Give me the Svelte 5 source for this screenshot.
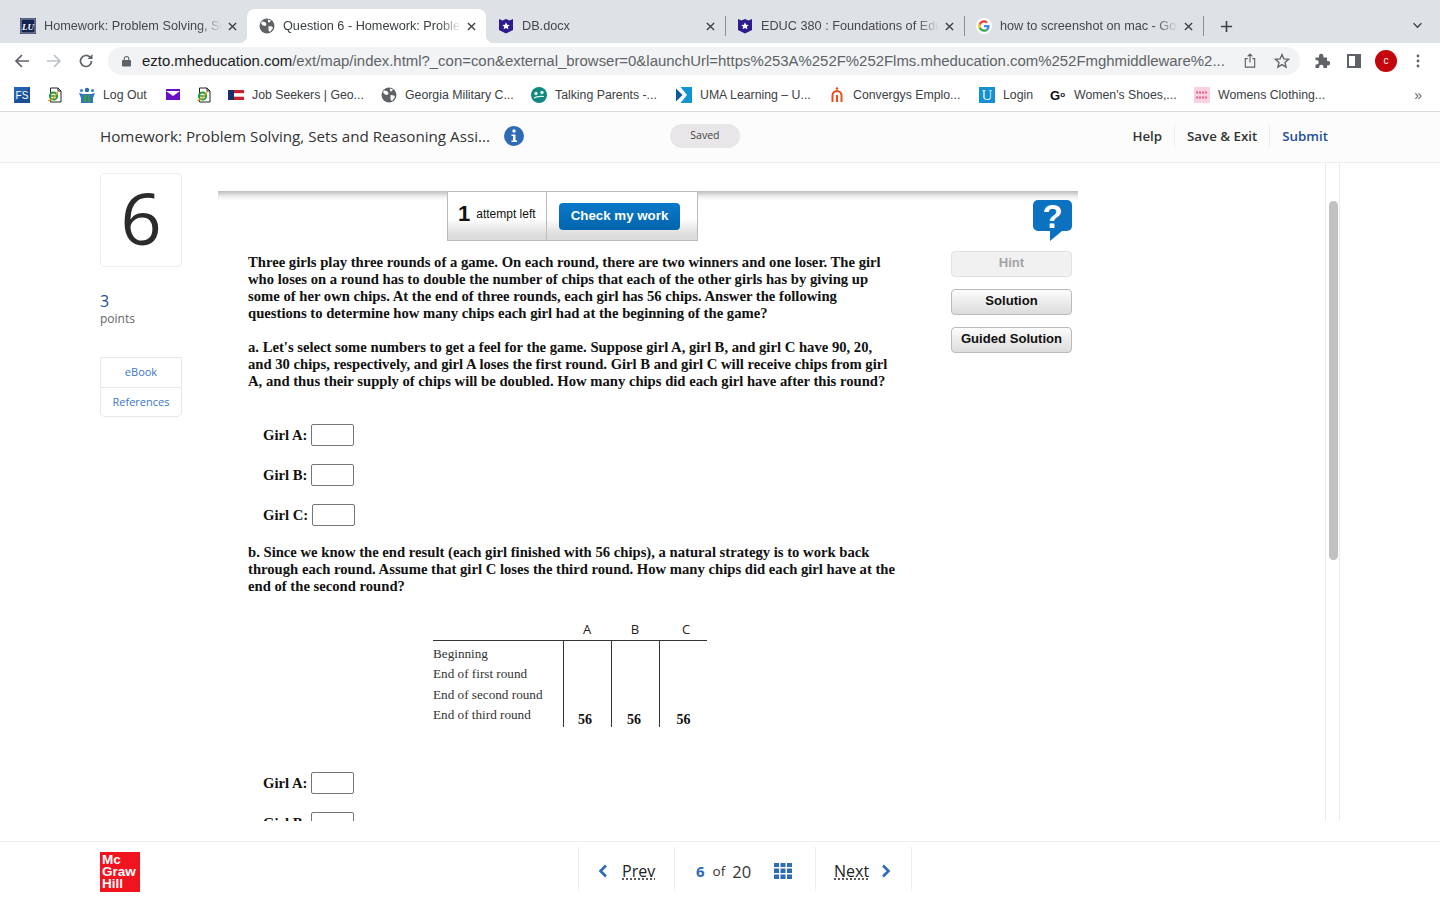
<script>
  const tabs = [
    { icon: 'lu', title: 'Homework: Problem Solving, Sets and Reasoning' },
    { icon: 'globe', title: 'Question 6 - Homework: Problem Solving', active: true },
    { icon: 'shield', title: 'DB.docx' },
    { icon: 'shield', title: 'EDUC 380 : Foundations of Education', divider: true },
    { icon: 'google', title: 'how to screenshot on mac - Google Search', divider: true }
  ];

  const bookmarks = [
    { icon: 'fs', w: 18 },
    { icon: 'ie', w: 17 },
    { icon: 'people', text: 'Log Out', w: 71 },
    { icon: 'mail', w: 16 },
    { icon: 'ie', w: 17 },
    { icon: 'flag', text: 'Job Seekers | Geo...', w: 138 },
    { icon: 'globe', text: 'Georgia Military C...', w: 135 },
    { icon: 'talk', text: 'Talking Parents -...', w: 130 },
    { icon: 'uma', text: 'UMA Learning – U...', w: 138 },
    { icon: 'conv', text: 'Convergys Emplo...', w: 135 },
    { icon: 'u', text: 'Login', w: 56 },
    { icon: 'go', text: "Women's Shoes,...", w: 129 },
    { icon: 'pink', text: 'Womens Clothing...', w: 135 }
  ];

  const rows = ['Beginning', 'End of first round', 'End of second round', 'End of third round'];
</script>

{#snippet favicon(name)}
  {#if name === 'lu'}
    <svg class="fav" viewBox="0 0 16 16"><rect width="16" height="16" fill="#14224f"/><rect x="1" y="1" width="14" height="14" fill="none" stroke="#fff" stroke-width=".6"/><text x="8" y="12" text-anchor="middle" class="lu">LU</text></svg>
  {:else if name === 'globe'}
    <svg class="fav" viewBox="0 0 16 16"><circle cx="8" cy="8" r="7.500" fill="#5f6368"/><path d="M3 3.500l3 .5 1.500 2-1 2-2.500-.5L2 5.500zM9 1.500l3 1-1.500 2-1.500-.5zM9.500 8l3.500.5 1 1.500-3 4-1.500-1.500z" fill="#fff"/></svg>
  {:else if name === 'shield'}
    <svg class="fav" viewBox="0 0 16 16"><path d="M1 1l3.500 1.500L8 1l3.500 1.500L15 1v11l-7 3.500L1 12z" fill="#2e1a8f"/><path d="M8 4.200l1.100 2.500 2.700.2-2 1.800.6 2.600L8 9.900l-2.400 1.400.6-2.600-2-1.800 2.700-.2z" fill="#fff"/></svg>
  {:else if name === 'google'}
    <svg class="fav" viewBox="0 0 16 16"><circle cx="8" cy="8" r="8" fill="#fff"/><path d="M13.600 8.100c0-.4 0-.8-.1-1.200H8v2.300h3.200c-.1.8-.6 1.400-1.200 1.800l1.900 1.500c1.100-1 1.700-2.500 1.700-4.400z" fill="#4285f4"/><path d="M8 13.800c1.600 0 2.900-.5 3.900-1.400L10 10.900c-.5.4-1.200.6-2 .6-1.500 0-2.800-1-3.300-2.400l-1.900 1.500c1 1.900 3 3.200 5.200 3.200z" fill="#34a853"/><path d="M4.700 9.100c-.2-.7-.2-1.500 0-2.200L2.800 5.400c-.8 1.600-.8 3.600 0 5.200z" fill="#fbbc05"/><path d="M8 4.500c.9 0 1.600.3 2.200.9l1.700-1.700C10.900 2.800 9.500 2.200 8 2.200c-2.200 0-4.200 1.300-5.200 3.200l1.900 1.500C5.200 5.500 6.500 4.500 8 4.500z" fill="#ea4335"/></svg>
  {:else if name === 'fs'}
    <svg class="fav" viewBox="0 0 16 16"><rect width="16" height="16" fill="#2460ad"/><path d="M0 16L16 0v16z" fill="#1b4f95"/><text x="8" y="12" text-anchor="middle" class="fs">FS</text></svg>
  {:else if name === 'ie'}
    <svg class="fav" viewBox="0 0 16 16"><path d="M3.500 1H11l3 3v11H3.500z" fill="#fff" stroke="#222"/><path d="M11 1v3h3" fill="none" stroke="#222"/><circle cx="6.500" cy="9" r="3.600" fill="none" stroke="#2a9a3a" stroke-width="2"/><path d="M3.500 9h6" stroke="#2a9a3a" stroke-width="1.500"/><path d="M1 13.500c3 .5 8-4 10-9" fill="none" stroke="#d9a21b" stroke-width="1.200"/></svg>
  {:else if name === 'people'}
    <svg class="fav" viewBox="0 0 16 16"><circle cx="8" cy="3" r="2.200" fill="#2a6ab0"/><circle cx="2.500" cy="3.500" r="1.600" fill="#3d86c6"/><circle cx="13.500" cy="3.500" r="1.600" fill="#3d86c6"/><path d="M0 6l4 1 4 0 4 0 4-1-2 5v5H2v-5z" fill="#2f78bd"/><path d="M5 8h6v7H5z" fill="#3f9b4f"/><path d="M7.500 8h1v7h-1z" fill="#2a6ab0"/></svg>
  {:else if name === 'mail'}
    <svg class="fav" viewBox="0 0 16 16"><rect x="1" y="2" width="14" height="11" fill="#6a10c8"/><path d="M1 4h14L8 9z" fill="#fff"/></svg>
  {:else if name === 'flag'}
    <svg class="fav" viewBox="0 0 16 16"><rect y="3" width="16" height="3.400" fill="#c8202f"/><rect y="6.400" width="16" height="3.300" fill="#fff"/><rect y="9.700" width="16" height="3.300" fill="#c8202f"/><rect y="3" width="6" height="10" fill="#1d2f6b"/></svg>
  {:else if name === 'talk'}
    <svg class="fav" viewBox="0 0 16 16"><circle cx="8" cy="8" r="8" fill="#12887c"/><circle cx="5" cy="6.500" r="1.700" fill="#dff5f2"/><circle cx="11" cy="5.500" r="1.700" fill="#dff5f2"/><path d="M3 11c2-1.500 5-2 10-1.500" stroke="#dff5f2" stroke-width="1.200" fill="none"/></svg>
  {:else if name === 'uma'}
    <svg class="fav" viewBox="0 0 16 16"><path d="M0 1.500L6.500 8 0 14.500z" fill="#0b5a9c"/><path d="M4.500 0H16v16H4.500L11 8z" fill="#1293d4"/></svg>
  {:else if name === 'conv'}
    <svg class="fav" viewBox="0 0 16 16"><circle cx="8" cy="1.500" r="1.300" fill="#e8501a"/><path d="M2.500 15V8.500a5.500 5.500 0 0 1 11 0V15h-2V8.500a3.500 3.500 0 0 0-7 0V15zM7 15V8h2v7z" fill="#e8501a"/></svg>
  {:else if name === 'u'}
    <svg class="fav" viewBox="0 0 16 16"><rect width="16" height="16" fill="#1390d4"/><text x="8" y="13" text-anchor="middle" class="uu">U</text></svg>
  {:else if name === 'go'}
    <svg class="fav" viewBox="0 0 16 16"><text x="0" y="13" class="go">G<tspan class="go-o" dy="-3">o</tspan></text></svg>
  {:else if name === 'pink'}
    <svg class="fav" viewBox="0 0 16 16"><rect width="16" height="16" fill="#fcd0de"/><path d="M2 5.500h12M2 10.500h12" stroke="#e8608e" stroke-width="2" stroke-dasharray="2 1"/></svg>
  {/if}
{/snippet}

<div class="browser">
  <div class="tabstrip">
    {#each tabs as tab}
      <div class="tab" class:active={tab.active} class:divider={tab.divider}>
        {@render favicon(tab.icon)}
        <span class="tab-title">{tab.title}</span>
        <svg class="tab-x" viewBox="0 0 10 10"><path d="M1 1l8 8M9 1l-8 8" stroke="#3c4043" stroke-width="1.500"/></svg>
      </div>
    {/each}
    <div class="tab-end">
      <svg class="plus" viewBox="0 0 14 14"><path d="M7 1v12M1 7h12" stroke="#3c4043" stroke-width="1.700"/></svg>
    </div>
    <svg class="chev" viewBox="0 0 12 8"><path d="M1.500 1.500L6 6l4.500-4.500" fill="none" stroke="#3c4043" stroke-width="1.500"/></svg>
  </div>

  <div class="toolbar">
    <svg class="tool first" viewBox="0 0 16 16"><path d="M15 8H2M8 2L2 8l6 6" fill="none" stroke="#5f6368" stroke-width="1.700"/></svg>
    <svg class="tool" viewBox="0 0 16 16"><path d="M1 8h13M8 2l6 6-6 6" fill="none" stroke="#bdc1c6" stroke-width="1.700"/></svg>
    <svg class="tool" viewBox="0 0 16 16"><path d="M13.500 8a5.500 5.500 0 1 1-1.600-3.900" fill="none" stroke="#5f6368" stroke-width="1.700"/><path d="M14.500 1v5h-5z" fill="#5f6368"/></svg>
    <div class="omnibox">
      <svg class="lock" viewBox="0 0 10 12"><path d="M2.500 5V3.500a2.500 2.500 0 0 1 5 0V5" fill="none" stroke="#5f6368" stroke-width="1.200"/><rect y="5" width="10" height="7" rx="1" fill="#5f6368"/></svg>
      <span class="url"><b>ezto.mheducation.com</b>/ext/map/index.html?_con=con&amp;external_browser=0&amp;launchUrl=https%253A%252F%252Flms.mheducation.com%252Fmghmiddleware%2...</span>
      <svg class="share" viewBox="0 0 12 16"><path d="M3.500 6H1v9h10V6H8.500M6 10V1M3.500 3.500L6 1l2.500 2.500" fill="none" stroke="#5f6368" stroke-width="1.200"/></svg>
      <svg class="star" viewBox="0 0 16 16"><path d="M8 1.500l1.900 4.400 4.700.4-3.600 3.100 1.100 4.700L8 11.600l-4.100 2.500L5 9.400 1.400 6.300l4.700-.4z" fill="none" stroke="#5f6368" stroke-width="1.300"/></svg>
    </div>
    <svg class="ext" viewBox="0 0 16 16"><path d="M1.500 4.500H5V3a2.200 2.200 0 0 1 4.400 0v1.500H13V8h1a2.200 2.200 0 0 1 0 4.400h-1V15H9.500v-1a2.200 2.200 0 0 0-4.400 0v1H1.500v-3.500h1a2.200 2.200 0 0 0 0-4.400h-1z" fill="#5f6368"/></svg>
    <svg class="panel" viewBox="0 0 14 14"><rect x="1" y="1" width="12" height="12" fill="none" stroke="#5f6368" stroke-width="2"/><rect x="8" y="1" width="5" height="12" fill="#5f6368"/></svg>
    <span class="avatar">c</span>
    <svg class="kebab" viewBox="0 0 4 14"><circle cx="2" cy="2" r="1.400" fill="#5f6368"/><circle cx="2" cy="7" r="1.400" fill="#5f6368"/><circle cx="2" cy="12" r="1.400" fill="#5f6368"/></svg>
  </div>

  <div class="bookmarks">
    {#each bookmarks as b}
      <div class="bm" style="width: {b.w}px">
        {@render favicon(b.icon)}
        {#if b.text}<span>{b.text}</span>{/if}
      </div>
    {/each}
    <span class="more">»</span>
  </div>
</div>

<header class="apphead">
  <h1>Homework: Problem Solving, Sets and Reasoning Assi...</h1>
  <svg class="info" viewBox="0 0 20 20"><circle cx="10" cy="10" r="10" fill="#2d6cb5"/><circle cx="10" cy="5" r="1.700" fill="#fff"/><path d="M7.500 8.500H11.500V14.500H13V16H7.500V14.500H9V10H7.500z" fill="#fff"/></svg>
  <span class="saved">Saved</span>
  <nav class="actions">
    <a href="#help">Help</a>
    <a href="#save">Save &amp; Exit</a>
    <a href="#submit" class="submit">Submit</a>
  </nav>
</header>

<main class="stage">
  <div class="scroller">
    <aside class="side">
      <div class="qnum">6</div>
      <div class="pts">3</div>
      <div class="pts-label">points</div>
      <div class="links">
        <a href="#ebook">eBook</a>
        <a href="#refs">References</a>
      </div>
    </aside>

    <section class="frame">
      <div class="frame-top">
        <div class="attempts"><strong>1</strong><span>attempt left</span></div>
        <div class="check"><button>Check my work</button></div>
        <svg class="help" viewBox="0 0 39 41">
          <path d="M5 0h29a5 5 0 0 1 5 5v21a5 5 0 0 1-5 5H29L17 41V31H5a5 5 0 0 1-5-5V5a5 5 0 0 1 5-5z" fill="#0a72c0"/>
          <text x="19.500" y="28" text-anchor="middle" class="qmark">?</text>
        </svg>
      </div>

      <div class="frame-body">
        <div class="question">
          <p>Three girls play three rounds of a game. On each round, there are two winners and one loser. The girl who loses on a round has to double the number of chips that each of the other girls has by giving up some of her own chips. At the end of three rounds, each girl has 56 chips. Answer the following questions to determine how many chips each girl had at the beginning of the game?</p>
          <p>a. Let's select some numbers to get a feel for the game. Suppose girl A, girl B, and girl C have 90, 20, and 30 chips, respectively, and girl A loses the first round. Girl B and girl C will receive chips from girl A, and thus their supply of chips will be doubled. How many chips did each girl have after this round?</p>

          <div class="answers">
            <label>Girl A: <input type="text"></label>
            <label>Girl B: <input type="text"></label>
            <label>Girl C: <input type="text"></label>
          </div>

          <p class="part-b">b. Since we know the end result (each girl finished with 56 chips), a natural strategy is to work back through each round. Assume that girl C loses the third round. How many chips did each girl have at the end of the second round?</p>

          <div class="chips">
            <div class="chips-head"><span></span><span>A</span><span>B</span><span class="head-c">C</span></div>
            <div class="chips-body">
              <div class="chips-labels">
                {#each rows as r}<div>{r}</div>{/each}
              </div>
              <div class="chips-col"><b>56</b></div>
              <div class="chips-col"><b>56</b></div>
              <div class="chips-col"><b>56</b></div>
            </div>
          </div>

          <div class="answers second">
            <label>Girl A: <input type="text"></label>
            <label>Girl B: <input type="text"></label>
          </div>
        </div>

        <div class="tools">
          <button class="disabled">Hint</button>
          <button>Solution</button>
          <button>Guided Solution</button>
        </div>
      </div>
    </section>
  </div>
  <div class="track"><div class="thumb"></div></div>
</main>

<footer class="foot">
  <div class="logo">Mc<br>Graw<br>Hill</div>
  <div class="pager">
    <div class="pg prev">
      <svg viewBox="0 0 10 14"><path d="M8 1.500L2.500 7 8 12.500" fill="none" stroke="#2d6cb5" stroke-width="2.600"/></svg>
      <a href="#prev">Prev</a>
    </div>
    <div class="pg count">
      <b>6</b><small>of</small><span>20</span>
      <svg viewBox="0 0 18 16"><path d="M0 0h5v4H0zM6.500 0h5v4h-5zM13 0h5v4h-5zM0 5.500h5V10H0zM6.500 5.500h5V10h-5zM13 5.500h5V10h-5zM0 11.500h5V16H0zM6.500 11.500h5V16h-5zM13 11.500h5V16h-5z" fill="#2d6cb5"/></svg>
    </div>
    <div class="pg next">
      <a href="#next">Next</a>
      <svg viewBox="0 0 10 14"><path d="M2 1.500L7.500 7 2 12.500" fill="none" stroke="#2d6cb5" stroke-width="2.600"/></svg>
    </div>
  </div>
</footer>

<style>
  :global(body) {
    background: #fff;
    overflow: hidden;
    font-family: "Liberation Sans", sans-serif;
  }

  /* chrome */
  .tabstrip {
    display: flex;
    align-items: flex-end;
    height: 43px;
    padding-left: 8px;
    background: #dee1e6;
    box-sizing: border-box;
  }
  .tab {
    position: relative;
    display: flex;
    align-items: center;
    width: 239px;
    height: 34px;
    padding: 0 10px 0 12px;
    box-sizing: border-box;
    font-size: 12.700px;
    color: #45484c;
  }
  .tab.active {
    background: #fff;
    border-radius: 8px 8px 0 0;
    color: #3c4043;
  }
  .tab.active::before,
  .tab.active::after {
    content: "";
    position: absolute;
    bottom: 0;
    width: 8px;
    height: 8px;
  }
  .tab.active::before {
    left: -8px;
    background: radial-gradient(circle at 0 0, transparent 8px, #fff 8.5px);
  }
  .tab.active::after {
    right: -8px;
    background: radial-gradient(circle at 100% 0, transparent 8px, #fff 8.5px);
  }
  .tab.divider::before,
  .tab-end::before {
    content: "";
    position: absolute;
    left: 0;
    top: 7px;
    height: 20px;
    width: 1px;
    background: #8d9095;
  }
  .fav {
    flex: none;
    width: 16px;
    height: 16px;
  }
  .lu {
    font: italic bold 9px "Liberation Serif", serif;
    fill: #fff;
  }
  .fs {
    font: 10px "Liberation Sans", sans-serif;
    fill: #fff;
  }
  .uu {
    font: 15px "Liberation Serif", serif;
    fill: #dff2fb;
  }
  .go {
    font: bold 13px "Liberation Sans", sans-serif;
    fill: #111;
  }
  .go-o {
    font-size: 8px;
  }
  .qmark {
    font: bold 33px "Liberation Sans", sans-serif;
    fill: #fff;
  }
  .tab-title {
    flex: 1;
    margin-left: 8px;
    padding-bottom: 1px;
    white-space: nowrap;
    overflow: hidden;
    mask-image: linear-gradient(to right, #000 calc(100% - 22px), transparent 100%);
  }
  .tab-x {
    flex: none;
    width: 9px;
    height: 9px;
    margin-left: 6px;
  }
  .tab-end {
    position: relative;
    height: 34px;
    width: 46px;
    display: flex;
    align-items: center;
    justify-content: center;
  }
  .plus {
    width: 13px;
    height: 13px;
  }
  .chev {
    width: 11px;
    height: 7px;
    margin: 0 17px 14px auto;
  }
  .toolbar {
    display: flex;
    align-items: center;
    height: 35px;
    background: #fff;
  }
  .tool {
    width: 16px;
    height: 16px;
    margin-right: 16px;
  }
  .tool.first {
    margin-left: 14px;
  }
  .omnibox {
    display: flex;
    align-items: center;
    width: 1192px;
    height: 28px;
    margin-left: -2px;
    padding-left: 14px;
    box-sizing: border-box;
    border-radius: 14px;
    background: #f1f3f4;
  }
  .lock {
    width: 9px;
    height: 12px;
    margin-right: 11px;
  }
  .url {
    width: 1084px;
    font-size: 14.930px;
    color: #5f6368;
    white-space: nowrap;
    overflow: hidden;
  }
  .url b {
    font-weight: normal;
    color: #202124;
  }
  .share {
    width: 12px;
    height: 15px;
    margin-left: 18px;
  }
  .star {
    width: 16px;
    height: 16px;
    margin-left: 18px;
  }
  .ext {
    width: 16px;
    height: 16px;
    margin-left: 14px;
  }
  .panel {
    width: 14px;
    height: 14px;
    margin-left: 17px;
  }
  .avatar {
    width: 22px;
    height: 22px;
    margin-left: 14px;
    border-radius: 50%;
    background: #c5050c;
    color: #fff;
    font-size: 10px;
    line-height: 21px;
    text-align: center;
  }
  .kebab {
    width: 4px;
    height: 14px;
    margin-left: 19px;
  }
  .bookmarks {
    display: flex;
    align-items: center;
    height: 34px;
    padding-left: 14px;
    box-sizing: border-box;
    border-bottom: 1px solid #dadce0;
    font-size: 12.300px;
    color: #3c4043;
  }
  .bm {
    flex: none;
    display: flex;
    align-items: center;
    gap: 8px;
    margin-right: 15px;
    white-space: nowrap;
  }
  .more {
    margin-left: auto;
    margin-right: 18px;
    font-size: 14px;
    color: #5f6368;
  }

  /* app header */
  .apphead {
    display: flex;
    align-items: center;
    height: 51px;
    padding: 0 112px 2px 100px;
    box-sizing: border-box;
    background: #fcfcfc;
    border-bottom: 1px solid #eeeeee;
    font-family: "Open Sans", sans-serif;
  }
  h1 {
    margin: 0;
    font-size: 15.200px;
    font-weight: 400;
    color: #333;
    white-space: nowrap;
  }
  .info {
    width: 20px;
    height: 20px;
    margin-left: 14px;
  }
  .saved {
    width: 70px;
    height: 24px;
    margin-left: 146px;
    border-radius: 12px;
    background: #e8e6e8;
    font-size: 10.500px;
    line-height: 23px;
    text-align: center;
    color: #444;
  }
  .actions {
    display: flex;
    margin-left: auto;
  }
  .actions a {
    padding: 2px 12px;
    border-left: 1px solid #ececec;
    font-size: 13.300px;
    font-weight: 600;
    color: #333;
    text-decoration: none;
  }
  .actions a:first-child {
    border-left: none;
  }
  .actions .submit {
    padding-right: 0;
    color: #1c4f9c;
  }

  /* page */
  .stage {
    display: flex;
    height: 678px;
    align-items: flex-start;
  }
  .scroller {
    display: flex;
    width: 1325px;
    height: 658px;
    overflow: hidden;
    box-sizing: border-box;
    padding-left: 100px;
  }
  .track {
    width: 13px;
    height: 658px;
    border-left: 1px solid #ececec;
    border-right: 1px solid #ececec;
    flex: none;
  }
  .thumb {
    width: 9px;
    height: 359px;
    margin: 38px 0 0 3px;
    border-radius: 5px;
    background: #c1c1c1;
  }
  .side {
    flex: none;
    width: 82px;
    padding-top: 10px;
    font-family: "Open Sans", sans-serif;
  }
  .qnum {
    height: 92px;
    border: 1px solid #eeeeee;
    border-radius: 4px;
    font-size: 72px;
    line-height: 86px;
    text-align: center;
    color: #2b2b2b;
  }
  .pts {
    margin-top: 24px;
    font-size: 16px;
    line-height: 20px;
    color: #1c4f9c;
  }
  .pts-label {
    font-size: 12px;
    line-height: 16px;
    color: #666;
  }
  .links {
    margin-top: 30px;
    border: 1px solid #e8e8e8;
    border-radius: 0 0 5px 5px;
  }
  .links a {
    display: block;
    height: 29px;
    font-size: 11px;
    line-height: 28px;
    text-align: center;
    color: #3b77c4;
    text-decoration: none;
  }
  .links a + a {
    height: 28px;
    border-top: 1px solid #e8e8e8;
  }

  .frame {
    flex: none;
    width: 860px;
    margin: 28px 0 0 36px;
    background: linear-gradient(#bdbdbd, #f2f2f2 60%, #fff) no-repeat top / 100% 10px;
  }
  .frame-top {
    display: flex;
    height: 50px;
    padding-left: 229px;
    box-sizing: border-box;
  }
  .attempts,
  .check {
    display: flex;
    align-items: center;
    border: 1px solid #bbb;
    background: linear-gradient(#fff 55%, #dcdcdc 90%);
    box-sizing: border-box;
  }
  .attempts {
    width: 100px;
    padding: 0 0 4px 10px;
    gap: 6px;
    font-size: 12px;
    color: #111;
  }
  .attempts strong {
    font-size: 22px;
  }
  .check {
    width: 151px;
    margin-left: 0;
    padding: 0 0 0 12px;
    border-left: none;
  }
  .check button {
    width: 121px;
    height: 27px;
    padding: 0 0 1px;
    border: none;
    border-radius: 4px;
    background: linear-gradient(#0a79c9, #0065ae);
    font: bold 13.300px "Liberation Sans", sans-serif;
    color: #fff;
  }
  .help {
    width: 39px;
    height: 41px;
    margin: 9px 6px 0 auto;
  }
  .frame-body {
    display: flex;
    margin-top: 10px;
  }
  .question {
    width: 649px;
    margin-left: 30px;
    padding-top: 3px;
    font: bold 14.670px/17px "Liberation Serif", serif;
    color: #111;
  }
  .question p {
    margin: 0 0 17px;
  }
  .answers {
    display: flex;
    flex-direction: column;
    gap: 18px;
    margin-top: 34px;
    padding-left: 15px;
  }
  .answers.second {
    margin-top: 45px;
  }
  .answers label {
    display: block;
    height: 22px;
    line-height: 22px;
  }
  .answers input {
    width: 43px;
    height: 22px;
    padding: 0;
    box-sizing: border-box;
    border: 1px solid #767676;
    border-radius: 2px;
    background: #fff;
    vertical-align: top;
  }
  .part-b {
    margin-top: 18px !important;
  }
  .chips {
    width: 274px;
    margin: 27px 0 0 185px;
    font: 13.200px/20.300px "Liberation Serif", serif;
    color: #333;
  }
  .chips-head {
    display: grid;
    grid-template-columns: 130px 48px 48px 48px;
    height: 18px;
    border-bottom: 1px solid #333;
    font: 13px/15px "Open Sans", sans-serif;
    text-align: center;
    color: #222;
  }
  .head-c {
    padding-left: 6px;
  }
  .chips-body {
    display: grid;
    grid-template-columns: 130px 48px 48px 48px;
    height: 86px;
  }
  .chips-labels {
    padding-top: 3px;
  }
  .chips-col {
    display: flex;
    align-items: flex-end;
    justify-content: center;
    border-left: 1px solid #333;
    font: bold 14px/14px "Liberation Serif", serif;
    color: #111;
    padding-right: 5px;
    box-sizing: border-box;
  }
  .chips-col + .chips-col {
    padding-right: 3px;
  }
  .chips-col + .chips-col + .chips-col {
    padding-right: 0;
  }
  .tools {
    display: flex;
    flex-direction: column;
    gap: 12px;
    margin-left: 54px;
  }
  .tools button {
    width: 121px;
    height: 26px;
    padding: 0 0 3px;
    border: 1px solid #bbb;
    border-radius: 4px;
    background: linear-gradient(#fcfcfc, #dcdcdc);
    font: bold 13.100px "Liberation Sans", sans-serif;
    color: #111;
  }
  .tools .disabled {
    background: #f1f1f1;
    border-color: #e2e2e2;
    color: #a4a4a4;
  }

  /* footer */
  .foot {
    display: flex;
    align-items: center;
    height: 59px;
    padding-left: 100px;
    box-sizing: border-box;
    border-top: 1px solid #eeeeee;
  }
  .logo {
    flex: none;
    width: 40px;
    height: 40px;
    margin-top: 2px;
    padding: 2px 0 0 2px;
    box-sizing: border-box;
    background: #f0141e;
    font-size: 13.500px;
    font-weight: bold;
    line-height: 12px;
    color: #fff;
  }
  .pager {
    display: flex;
    height: 44px;
    margin: -4px 0 0 438px;
    border-right: 1px solid #eeeeee;
    font-family: "Open Sans", sans-serif;
    color: #333;
  }
  .pg {
    display: flex;
    align-items: center;
    padding-top: 4px;
    box-sizing: border-box;
    border-left: 1px solid #eeeeee;
    font-size: 16px;
  }
  .pg a {
    color: #222;
    text-decoration: underline dotted;
    text-underline-offset: 2px;
  }
  .pg > svg {
    width: 10px;
    height: 14px;
  }
  .prev {
    width: 96px;
    padding-left: 19px;
    gap: 14px;
  }
  .count {
    width: 141px;
    padding-left: 21px;
  }
  .count b {
    color: #2d6cb5;
    font-size: 15px;
  }
  .count small {
    margin: 0 7px 0 8px;
    font-size: 13.500px;
  }
  .count span {
    font-size: 16.500px;
  }
  .count svg {
    width: 18px;
    height: 16px;
    margin-left: 23px;
  }
  .next {
    width: 96px;
    padding-left: 18px;
    gap: 12px;
  }
</style>
